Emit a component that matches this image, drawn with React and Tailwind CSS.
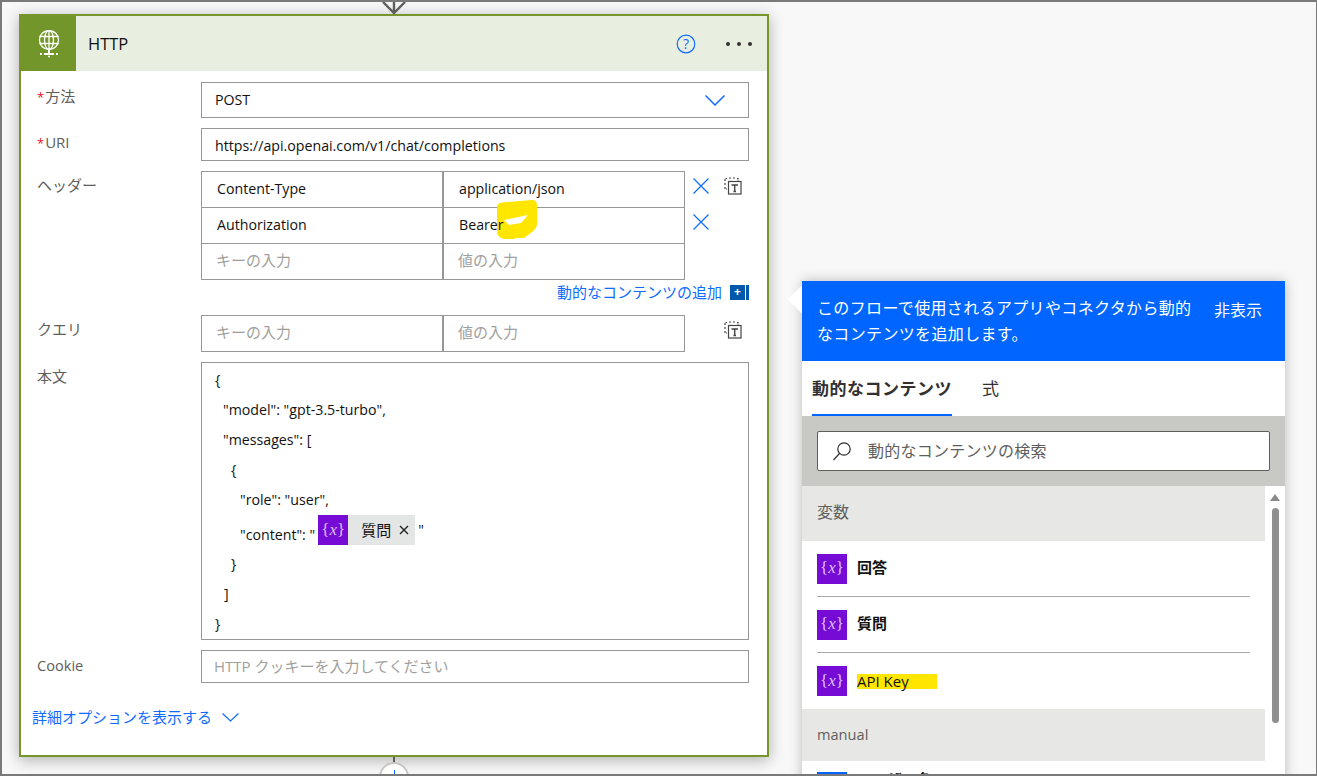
const font = { fontFamily: '"Open Sans", "Noto Sans CJK JP", sans-serif' };

function GlobeIcon() {
  return (
    <svg width="24" height="28" viewBox="0 0 24 28" fill="none" stroke="#fff" strokeWidth="1.3">
      <circle cx="12" cy="10" r="9.5" />
      <ellipse cx="12" cy="10" rx="4.5" ry="9.5" />
      <path d="M2.5 6.5h19M2.5 13.5h19M12 .5v19" />
      <path d="M12 20v3" strokeWidth="2" />
      <path d="M3 24h2M7 24h10M19 24h2" strokeWidth="2" />
      <path d="M11 26.5h2" strokeWidth="1.5" />
    </svg>
  );
}

function VarIcon() {
  return (
    <span className="flex h-[30px] w-[30px] shrink-0 items-center justify-center bg-[#770bd6] pb-[2px] text-[#dcc0f6]">
      <span className="text-[17px] leading-none" style={{ fontFamily: '"Liberation Serif", serif' }}>
        {"{"}<i>x</i>{"}"}
      </span>
    </span>
  );
}

function CopyIcon() {
  return (
    <svg width="18" height="18" viewBox="0 0 18 18" fill="none" stroke="#444" strokeWidth="1.2">
      <path d="M1 4V1.5h2M5 1h2M9 1h2M13 1.5h1V4M1 6v2M1 10v2h2" strokeDasharray="2 1" />
      <rect x="4.5" y="4.5" width="12.5" height="12.5" />
      <path d="M7.5 8h6.5M10.7 8v6.5M9.5 14.5h2.5" strokeWidth="1.4" />
    </svg>
  );
}

function CloseIcon({ className = "" }) {
  return (
    <svg className={className} width="16" height="16" viewBox="0 0 16 16" fill="none" stroke="#0f6cff" strokeWidth="1.2">
      <path d="M.5.5l15 15M15.500.5l-15 15" />
    </svg>
  );
}

function Chevron({ width, height, sw = 1.5 }) {
  return (
    <svg width={width} height={height} viewBox={`0 0 ${width} ${height}`} fill="none" stroke="#0f6cff" strokeWidth={sw}>
      <path d={`M.5 .5L${width / 2} ${height - 1}L${width - 0.5} .5`} />
    </svg>
  );
}

function Label({ children, required, latin }) {
  return (
    <div className={`w-[164px] shrink-0 leading-[20px] text-[#605e5c] ${latin ? "pt-[5px] text-[14.6px]" : "pt-[4px] text-[15px]"}`}>
      {required && <span className="mr-[1px] text-[13px] text-[#e81123]">*</span>}
      {children}
    </div>
  );
}

function Cell({ children, muted, first }) {
  return (
    <div
      className={`relative flex h-full items-center ${first ? "w-[242px] border-r-2 border-[#979797]" : "w-[240px]"} ${muted ? "pb-[2px] pl-[14px] text-[15px] text-[#a19f9d]" : "pb-[2px] pl-[15px] text-[14.2px] text-[#111]"}`}
    >
      {children}
    </div>
  );
}

function DynamicRow({ name, highlight, last }) {
  return (
    <div className="flex h-[56px] items-center pr-[15px] pl-[15px]">
      <div className={`flex h-[56px] flex-1 items-center gap-[10px] ${last ? "" : "border-b border-[#aaa]"}`}>
        <VarIcon />
        {highlight ? (
          <span className="bg-[#ffe600] pr-[28px] text-[15px] leading-[15px] font-medium text-[#111]">{name}</span>
        ) : (
          <span className="pb-[3px] text-[15px] font-semibold text-[#111]">{name}</span>
        )}
      </div>
    </div>
  );
}

export default function App() {
  return (
    <div className="relative flex h-[776px] w-[1317px] items-start overflow-hidden border-t-2 border-r border-b-2 border-l-2 border-[#7a7a7a] bg-[#f8f8f8]" style={font}>
      {/* connector above the card */}
      <svg className="absolute top-[-2px] left-[379px]" width="26" height="15" viewBox="0 0 26 15" fill="none" stroke="#605e5c" strokeWidth="2.4">
        <path d="M2 2l11 11 11-11M13 2v11" />
      </svg>
      <div className="absolute top-[755px] left-[391px] h-[8px] w-[2px] bg-[#605e5c]" />
      <div className="absolute top-[760px] left-[377px] flex h-[30px] w-[30px] justify-center rounded-full border-2 border-[#c8c6c4] bg-white pt-[6px]">
        <span className="h-[8px] w-[1px] bg-[#0f6cff]" />
      </div>

      <div className="mt-[12px] ml-[17px] h-[743px] w-[750px] shrink-0 border-2 border-[#76962b] bg-white shadow-[0_3px_14px_rgba(0,0,0,0.3)]">
        <div className="flex h-[55px] items-center bg-[#e9efe0]">
          <div className="flex h-[55px] w-[55px] items-center justify-center bg-[#72962a]">
            <GlobeIcon />
          </div>
          <div className="ml-[12px] flex-1 pt-[2px] text-[16.5px] text-[#111]">HTTP</div>
          <svg className="mr-[30px]" width="20" height="20" viewBox="0 0 20 20" fill="none" stroke="#0f6cff" strokeWidth="1.2">
            <circle cx="10" cy="10" r="8.8" />
            <text x="10" y="15" textAnchor="middle" fontSize="14" fill="#0f6cff" stroke="none">?</text>
          </svg>
          <div className="mr-[15px] flex gap-[7px]">
            <span className="h-[4px] w-[4px] rounded-full bg-[#323130]" />
            <span className="h-[4px] w-[4px] rounded-full bg-[#323130]" />
            <span className="h-[4px] w-[4px] rounded-full bg-[#323130]" />
          </div>
        </div>

        <div className="flex flex-col pr-[18px] pl-[16px]">
          <div className="mt-[11px] flex">
            <Label required>方法</Label>
            <div className="flex h-[36px] flex-1 items-center justify-between border border-[#979797] pr-[23px] pl-[13px] text-[14.2px] text-[#111]">
              <span className="pb-[1px]">POST</span>
              <Chevron width={20} height={11} />
            </div>
          </div>

          <div className="mt-[10px] flex">
            <Label required>URI</Label>
            <div className="flex h-[33px] flex-1 items-center border border-[#979797] pt-[3px] pl-[13px] text-[14.2px] text-[#111]">
              https://api.openai.com/v1/chat/completions
            </div>
          </div>

          <div className="mt-[10px] flex">
            <Label>ヘッダー</Label>
            <div className="w-[484px] border border-[#979797]">
              <div className="flex h-[36px] border-b border-[#979797]">
                <Cell first>Content-Type</Cell>
                <Cell>application/json</Cell>
              </div>
              <div className="flex h-[36px] border-b border-[#979797]">
                <Cell first>Authorization</Cell>
                <Cell>
                  {/* yellow marker over the API key */}
                  <svg className="absolute top-[-8px] left-[52px]" width="41" height="40" viewBox="0 0 41 40">
                    <path d="M1 8Q1 3 6 2.500L36 0Q41 0 41 5V24Q41 28 36 32L28 38L20 38L18 39L8 39Q1 38 1 30Z" fill="#ffe600" />
                    <path d="M8 20L32 15L25 23L13 25Z" fill="#fff" />
                  </svg>
                  <span className="relative">Bearer</span>
                </Cell>
              </div>
              <div className="flex h-[35px]">
                <Cell muted first>キーの入力</Cell>
                <Cell muted>値の入力</Cell>
              </div>
            </div>
            <div className="ml-[8px] flex flex-col">
              <div className="flex h-[30px] items-center gap-[15px]">
                <CloseIcon />
                <CopyIcon />
              </div>
              <div className="mt-[6px] flex h-[30px] items-center">
                <CloseIcon />
              </div>
            </div>
          </div>

          <div className="flex h-[24px] items-center justify-end">
            <span className="mr-[8px] text-[15px] text-[#0f6cff]">動的なコンテンツの追加</span>
            <span className="flex h-[15px] w-[15px] items-center justify-center bg-[#0058ad] text-[12px] leading-none font-bold text-white">+</span>
            <span className="ml-[1px] h-[15px] w-[3px] bg-[#0058ad]" />
          </div>

          <div className="mt-[11px] flex">
            <Label>クエリ</Label>
            <div className="flex h-[37px] w-[484px] border border-[#979797]">
              <Cell muted first>キーの入力</Cell>
              <Cell muted>値の入力</Cell>
            </div>
            <div className="ml-[39px] pt-[6px]">
              <CopyIcon />
            </div>
          </div>

          <div className="mt-[10px] flex">
            <Label>本文</Label>
            <div className="h-[278px] flex-1 border border-[#979797] pt-[2px] text-[14.2px] leading-[30px] text-[#111]">
              <div className="pl-[13px]">{"{"}</div>
              <div className="pl-[21px]">"model": "gpt-3.5-turbo",</div>
              <div className="pl-[21px]">"messages": [</div>
              <div className="pl-[29px]">{"{"}</div>
              <div className="pl-[38px]">"role": "user",</div>
              <div className="flex h-[34px] items-start pl-[38px]">
                <span className="leading-[40px]">"content": "</span>
                <span className="ml-[3px] flex h-[30px] items-center bg-[#e4e5e5]">
                  <VarIcon />
                  <span className="ml-[13px] text-[15px]">質問</span>
                  <svg className="mr-[6px] ml-[8px]" width="10" height="10" viewBox="0 0 10 10" fill="none" stroke="#222" strokeWidth="1.4">
                    <path d="M1 1l8 8M9 1l-8 8" />
                  </svg>
                </span>
                <span className="ml-[3px]">"</span>
              </div>
              <div className="pl-[29px]">{"}"}</div>
              <div className="pl-[22px]">]</div>
              <div className="pl-[13px]">{"}"}</div>
            </div>
          </div>

          <div className="mt-[10px] flex">
            <Label latin>Cookie</Label>
            <div className="flex h-[33px] flex-1 items-center border border-[#979797] pl-[12px] text-[15px] text-[#a19f9d]">
              HTTP&nbsp;クッキーを入力してください
            </div>
          </div>

          <div className="mt-[23px] ml-[-5px] flex items-center gap-[10px] text-[15px] text-[#0f6cff]">
            詳細オプションを表示する
            <Chevron width={17} height={9} sw={1.2} />
          </div>
        </div>
      </div>

      {/* dynamic content panel */}
      <div className="relative mt-[279px] ml-[33px] w-[483px] shrink-0 bg-white shadow-[0_0_12px_rgba(0,0,0,0.25)]">
        <div className="absolute top-[8px] left-[-10px] h-[21px] w-[21px] rotate-45 bg-white" />
        <div className="relative flex h-[80px] items-start justify-between bg-[#0066ff] pt-[14px] pr-[23px] pl-[15px] text-[16px] leading-[26px] tracking-[0.35px] text-white">
          <div className="w-[382px]">このフローで使用されるアプリやコネクタから動的なコンテンツを追加します。</div>
          <div className="shrink-0 pt-[2px] tracking-normal">非表示</div>
        </div>
        <div className="flex h-[55px] gap-[30px] bg-white pl-[10px] text-[17px] text-[#323130]">
          <div className="flex h-[55px] items-center border-b-2 border-[#0066ff] pt-[2px] font-bold tracking-[0.5px]">動的なコンテンツ</div>
          <div className="flex h-[55px] items-center pb-[0px]">式</div>
        </div>
        <div className="h-[70px] bg-[#c8c8c5] px-[15px] pt-[15px]">
          <div className="flex h-[40px] items-center rounded-[2px] border border-[#605e5c] bg-white pl-[15px] text-[16px] tracking-[0.25px] text-[#605e5c]">
            <svg className="mr-[17px]" width="18" height="19" viewBox="0 0 18 19" fill="none" stroke="#323130" strokeWidth="1.2">
              <circle cx="11" cy="7" r="6.2" />
              <path d="M6.500 11.500L.5 18" />
            </svg>
            動的なコンテンツの検索
          </div>
        </div>
        <div className="flex">
          <div className="flex-1">
            <div className="flex h-[55px] items-center bg-[#e7e8e6] pb-[4px] pl-[15px] text-[16px] text-[#605e5c]">変数</div>
            <DynamicRow name="回答" />
            <DynamicRow name="質問" />
            <DynamicRow name="API Key" highlight last />
            <div className="flex h-[52px] items-center bg-[#e7e8e6] pl-[15px] text-[14.6px] text-[#605e5c]">manual</div>
            <div className="flex h-[56px] items-start gap-[10px] px-[15px] pt-[11px]">
              <span className="h-[30px] w-[30px] bg-[#0066ff]" />
              <span className="mt-[-4px] text-[15px] font-semibold text-[#111]">ユーザー名</span>
            </div>
          </div>
          <div className="flex w-[20px] flex-col items-center bg-white pt-[8px]">
            <div className="h-0 w-0 border-x-[5px] border-b-[7px] border-x-transparent border-b-[#8a8a8a]" />
            <div className="mt-[7px] h-[215px] w-[7px] rounded-full bg-[#8f8f8f]" />
          </div>
        </div>
      </div>
    </div>
  );
}
